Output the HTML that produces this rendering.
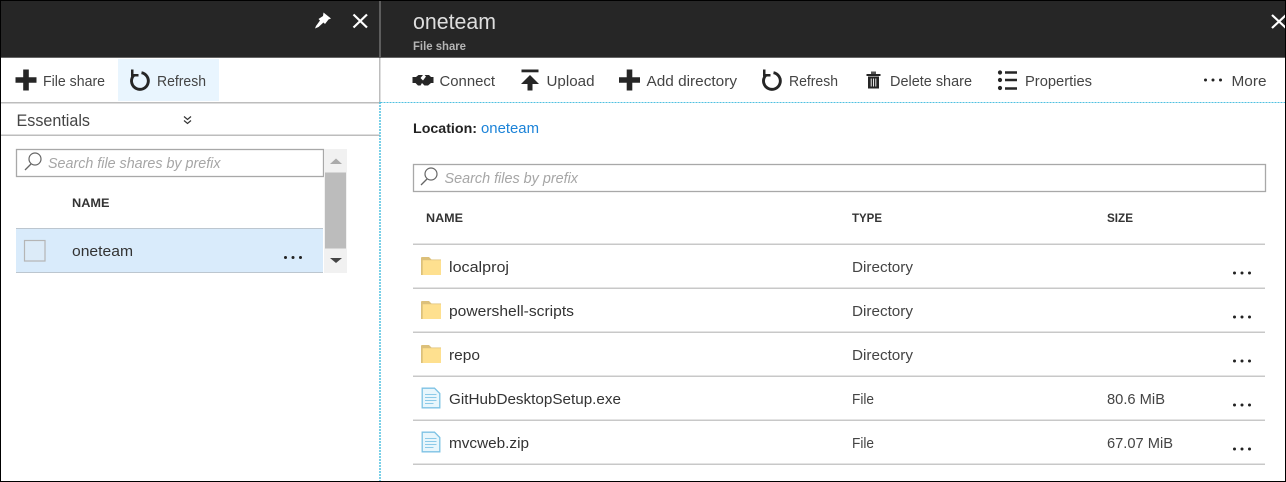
<!DOCTYPE html>
<html><head><meta charset="utf-8"><style>
html,body{margin:0;padding:0;background:#fff;width:1286px;height:482px;overflow:hidden}
svg{display:block}
text{font-family:"Liberation Sans",sans-serif;fill:#444;font-size:15px}
.t{fill:#444}
.d{fill:#333}
.b{font-weight:bold;font-size:12px;fill:#333}
.s{font-style:italic;fill:#a6a6a6;font-size:15px}
</style></head><body>
<svg width="1286" height="482" viewBox="0 0 1286 482" xmlns="http://www.w3.org/2000/svg">
<defs>
<g id="plus"><path d="M-10.500 -2.800H-2.800V-10.500H2.800V-2.800H10.500V2.800H2.800V10.500H-2.800V2.800H-10.500Z" fill="#262626"/></g>
<g id="refresh"><path d="M-5.800 -6L-7.200 -4.500A8.400 8.400 0 1 0 1.500 -8.300" fill="none" stroke="#262626" stroke-width="2.900"/><path d="M-9 -11.500H-6.500L-6.500 -7H-1.500V-4.500H-9Z" fill="#262626"/></g>
<g id="folder"><path d="M0 1.500Q0 .5 1 .5H8L10.500 3H20V18.500H0Z" fill="#dcc07a"/><path d="M1.700 3.800H20V18.500H1.700Z" fill="#fee08f"/></g>
<g id="file"><path d="M.7 .7H13L18.300 6V20.300H.7Z" fill="#e8f6fc" stroke="#7cc2e4" stroke-width="1.300"/><path d="M3.500 7H15M3.500 10H15M3.500 13H15M3.500 16H12" stroke="#8ccae8" stroke-width="1.100"/></g>
<g id="dots"><circle cx="1.500" cy="0" r="1.500" fill="#222"/><circle cx="9" cy="0" r="1.500" fill="#222"/><circle cx="16.500" cy="0" r="1.500" fill="#222"/></g>
<g id="search"><circle cx="4" cy="-3" r="6" fill="none" stroke="#666" stroke-width="1.200"/><path d="M0 2L-6 8" stroke="#666" stroke-width="1.300"/></g>
</defs>

<rect width="1286" height="482" fill="#000"/>
<rect x="1" y="1" width="1284" height="480" fill="#fff"/>
<rect x="1" y="1" width="1284" height="56.500" fill="#262626"/>
<rect x="1" y="57" width="1284" height="1" fill="#666"/>
<rect x="379" y="1" width="2" height="57" fill="#5d5d5d"/>

<rect x="118" y="59" width="101" height="42" fill="#e9f5fe"/>
<rect x="1" y="102" width="379" height="1.500" fill="#bdbdbd"/>
<rect x="1" y="134.500" width="379" height="1.500" fill="#bdbdbd"/>
<rect x="379" y="58" width="1.500" height="45" fill="#bdbdbd"/>
<path d="M380.500 102.500H1285" stroke="#4fc0e0" stroke-width="1" stroke-dasharray="2 1"/>
<path d="M380 102V481" stroke="#4fc0e0" stroke-width="1.500" stroke-dasharray="2 1"/>

<path d="M323.500 12.500L331 18.500L328.500 19.500L325 24L323.500 22.500L318.500 27L315 28.500L316 26L320 20.500L318.500 19L323 16Z" fill="#fff"/>
<path d="M353.500 14.500L367 27.500M367 14.500L353.500 27.500" stroke="#fff" stroke-width="2.200"/>
<path d="M1272 15L1286 28M1286 15L1272 28" stroke="#fff" stroke-width="2.200"/>
<rect x="1285" y="0" width="1" height="482" fill="#000"/>

<text x="413" y="29" textLength="83" lengthAdjust="spacingAndGlyphs" style="fill:#dedede;font-size:22px">oneteam</text>
<text x="413" y="50" textLength="53" lengthAdjust="spacingAndGlyphs" style="fill:#b5b5b5;font-size:12px;font-weight:bold">File share</text>

<use href="#plus" x="26" y="80"/>
<text class="t" x="43" y="86" textLength="62" lengthAdjust="spacingAndGlyphs">File share</text>
<use href="#refresh" x="140" y="81"/>
<text class="t" x="157" y="86" textLength="49" lengthAdjust="spacingAndGlyphs">Refresh</text>
<text class="t" x="16.500" y="126" textLength="73.500" lengthAdjust="spacingAndGlyphs" style="font-size:17px">Essentials</text>
<path d="M184 116.500L187.500 119.500L191 116.500M184 120.500L187.500 123.500L191 120.500" fill="none" stroke="#333" stroke-width="1.200"/>

<rect x="16.500" y="149.500" width="307" height="27" fill="#fff" stroke="#a8a8a8" stroke-width="1.300"/>
<use href="#search" x="31" y="162"/>
<text class="s" x="48" y="168" textLength="172.500" lengthAdjust="spacingAndGlyphs">Search file shares by prefix</text>
<rect x="324" y="149" width="23" height="124" fill="#f1f1f1"/>
<rect x="325" y="172.500" width="21" height="76" fill="#bcbcbc"/>
<path d="M330 164L336 158.500L342 164Z" fill="#aaa"/>
<path d="M330 258L336 263L342 258Z" fill="#444"/>
<text class="b" x="72" y="207" textLength="37.500" lengthAdjust="spacingAndGlyphs">NAME</text>
<rect x="16" y="228" width="307" height="44.500" fill="#d9ebfb"/>
<rect x="16" y="228" width="307" height="1" fill="#bcc6cf"/>
<rect x="16" y="272" width="307" height="1" fill="#bcc6cf"/>
<rect x="24.500" y="240.500" width="20.500" height="20.500" fill="#dcebf8" stroke="#b5b5b5" stroke-width="1.200"/>
<text class="d" x="72" y="256" textLength="61" lengthAdjust="spacingAndGlyphs">oneteam</text>
<use href="#dots" x="284" y="257.500"/>

<path d="M412.500 77H416L418.500 75H423L420.500 78L423 80.500L426 76.500L424.500 75H429L431 77H433.500V83H431L428 85.500H424.500L422 83L420.500 85.500H418L415.500 83H412.500Z" fill="#262626"/>
<text class="t" x="439.500" y="86" textLength="55.500" lengthAdjust="spacingAndGlyphs">Connect</text>
<rect x="521.500" y="69.500" width="17" height="2.800" fill="#262626"/>
<path d="M530 75L521 84H527.500V90.500H532.500V84H539Z" fill="#262626"/>
<text class="t" x="546.500" y="86" textLength="48" lengthAdjust="spacingAndGlyphs">Upload</text>
<use href="#plus" x="629.500" y="80"/>
<text class="t" x="646.500" y="86" textLength="90.500" lengthAdjust="spacingAndGlyphs">Add directory</text>
<use href="#refresh" x="772" y="81"/>
<text class="t" x="789" y="86" textLength="49" lengthAdjust="spacingAndGlyphs">Refresh</text>
<rect x="866.500" y="74" width="14" height="2" fill="#262626"/>
<rect x="871" y="71.500" width="5" height="2.500" fill="#555"/>
<path d="M868 76.500H879V88.500H868Z" fill="#262626"/>
<path d="M871.200 78.500V86.500M873.500 78.500V86.500M875.800 78.500V86.500" stroke="#fff" stroke-width=".9"/>
<text class="t" x="890" y="86" textLength="82" lengthAdjust="spacingAndGlyphs">Delete share</text>
<circle cx="1000" cy="72.500" r="2.100" fill="#262626"/><circle cx="1000" cy="80" r="2.100" fill="#262626"/><circle cx="1000" cy="88" r="2.100" fill="#262626"/>
<path d="M1005 72.500H1017M1005 80H1017M1005 88.500H1017" stroke="#262626" stroke-width="2.400"/>
<text class="t" x="1025" y="86" textLength="67" lengthAdjust="spacingAndGlyphs">Properties</text>
<use href="#dots" x="1204" y="80"/>
<text class="t" x="1231.500" y="86" textLength="35" lengthAdjust="spacingAndGlyphs">More</text>

<text x="413" y="133" textLength="64" lengthAdjust="spacingAndGlyphs" style="font-size:14px;font-weight:bold;fill:#222">Location:</text>
<text x="481" y="133" textLength="58" lengthAdjust="spacingAndGlyphs" style="font-size:14.500px;fill:#1c83d8">oneteam</text>

<rect x="413.500" y="164.500" width="852" height="27" fill="#fff" stroke="#a8a8a8" stroke-width="1.300"/>
<use href="#search" x="427" y="177"/>
<text class="s" x="444.500" y="183" textLength="133.500" lengthAdjust="spacingAndGlyphs">Search files by prefix</text>

<text class="b" x="426" y="222" textLength="37" lengthAdjust="spacingAndGlyphs">NAME</text>
<text class="b" x="852" y="222" textLength="30" lengthAdjust="spacingAndGlyphs">TYPE</text>
<text class="b" x="1107" y="222" textLength="26" lengthAdjust="spacingAndGlyphs">SIZE</text>

<g fill="#c8c8c8">
<rect x="413" y="243.500" width="852" height="1.500"/>
<rect x="413" y="287.500" width="852" height="1.500"/>
<rect x="413" y="331.500" width="852" height="1.500"/>
<rect x="413" y="375.500" width="852" height="1.500"/>
<rect x="413" y="419.500" width="852" height="1.500"/>
<rect x="413" y="463.500" width="852" height="1.500"/>
</g>

<use href="#folder" x="421" y="256.500"/>
<text class="d" x="449" y="272" textLength="60" lengthAdjust="spacingAndGlyphs">localproj</text>
<text class="t" x="852" y="272" textLength="61" lengthAdjust="spacingAndGlyphs">Directory</text>
<use href="#dots" x="1233" y="273"/>

<use href="#folder" x="421" y="300.500"/>
<text class="d" x="449" y="316" textLength="125" lengthAdjust="spacingAndGlyphs">powershell-scripts</text>
<text class="t" x="852" y="316" textLength="61" lengthAdjust="spacingAndGlyphs">Directory</text>
<use href="#dots" x="1233" y="317"/>

<use href="#folder" x="421" y="344.500"/>
<text class="d" x="449" y="360" textLength="31" lengthAdjust="spacingAndGlyphs">repo</text>
<text class="t" x="852" y="360" textLength="61" lengthAdjust="spacingAndGlyphs">Directory</text>
<use href="#dots" x="1233" y="361"/>

<use href="#file" x="421.500" y="387.500"/>
<text class="d" x="449" y="404" textLength="172" lengthAdjust="spacingAndGlyphs">GitHubDesktopSetup.exe</text>
<text class="t" x="852" y="404" textLength="22" lengthAdjust="spacingAndGlyphs">File</text>
<text class="t" x="1107" y="404" textLength="58" lengthAdjust="spacingAndGlyphs">80.6 MiB</text>
<use href="#dots" x="1233" y="405"/>

<use href="#file" x="421.500" y="431.500"/>
<text class="d" x="449" y="448" textLength="80" lengthAdjust="spacingAndGlyphs">mvcweb.zip</text>
<text class="t" x="852" y="448" textLength="22" lengthAdjust="spacingAndGlyphs">File</text>
<text class="t" x="1107" y="448" textLength="66" lengthAdjust="spacingAndGlyphs">67.07 MiB</text>
<use href="#dots" x="1233" y="449"/>
</svg>
</body></html>
